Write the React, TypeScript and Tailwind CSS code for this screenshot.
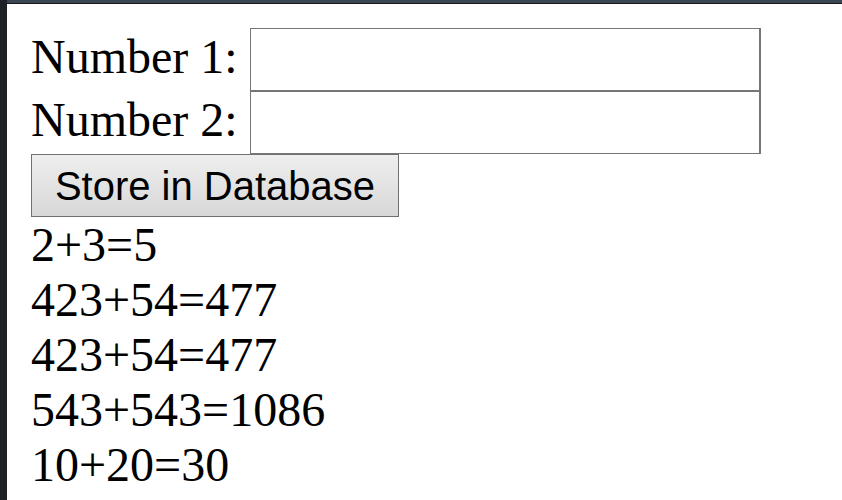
import React, { useState } from 'react';

const rows = ['2+3=5', '423+54=477', '423+54=477', '543+543=1086', '10+20=30'];

export default function App() {
  const [a, setA] = useState('');
  const [b, setB] = useState('');

  return (
    <div className="flex w-[842px] h-[500px] overflow-hidden bg-white">
      {/* window frame */}
      <div className="w-[7px] h-full shrink-0 bg-[#1e2126]" />
      <div className="flex-1 flex flex-col">
        <div className="h-[3px] bg-[#3a4654]" />
        <div className="h-px bg-[#15171a]" />

        <div className="px-[24px] pt-[24px] font-['Liberation_Serif','Times_New_Roman',serif] text-[48px] text-black">
          <div className="flex items-start h-[63px]">
            <span className="leading-[55px] mt-px whitespace-pre">Number 1:&nbsp;</span>
            <input
              value={a}
              onChange={(e) => setA(e.target.value)}
              className="w-[511px] h-[63px] border border-r-2 border-[#767676] bg-white outline-none px-2 text-[40px] font-['Liberation_Sans',Arial,sans-serif]"
            />
          </div>
          <div className="flex items-start h-[63px]">
            <span className="leading-[55px] mt-px whitespace-pre">Number 2:&nbsp;</span>
            <input
              value={b}
              onChange={(e) => setB(e.target.value)}
              className="w-[511px] h-[63px] border border-r-2 border-[#767676] bg-white outline-none px-2 text-[40px] font-['Liberation_Sans',Arial,sans-serif]"
            />
          </div>
          <button className="w-[368px] h-[63px] border border-[#707070] bg-gradient-to-b from-[#eeeeee] to-[#d8d8d8] text-[40px] leading-none text-black font-['Liberation_Sans',Arial,sans-serif] flex items-center justify-center">
            Store in Database
          </button>

          <div>
            {rows.map((r, i) => (
              <div key={i} className="leading-[55px]">{r}</div>
            ))}
          </div>
        </div>
      </div>
    </div>
  );
}
